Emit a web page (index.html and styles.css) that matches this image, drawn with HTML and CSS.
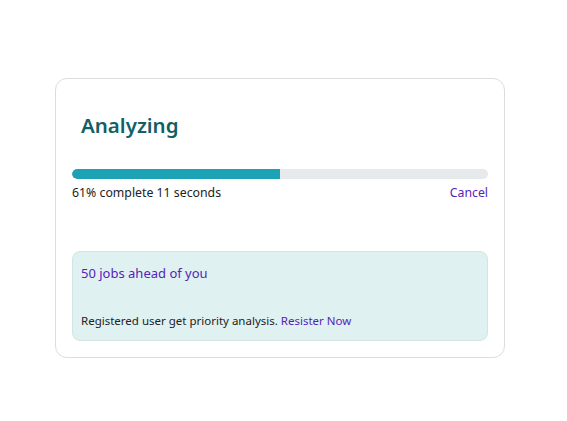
FILE: index.html
```html
<!DOCTYPE html>
<html>
<head>
<meta charset="utf-8">
<link rel="stylesheet" href="styles.css">
</head>
<body>
<div class="card">
  <h1 class="title">Analyzing</h1>
  <div class="track"><div class="fill" style="width: 50%"></div></div>
  <div class="status">
    <span>61% complete 11 seconds</span>
    <a class="link" href="#">Cancel</a>
  </div>
  <div class="info">
    <div class="jobs">50 jobs ahead of you</div>
    <div class="note">Registered user get priority analysis. <a class="link" href="#">Resister Now</a></div>
  </div>
</div>
</body>
</html>
```
FILE: styles.css
```css
* { box-sizing: border-box; }
html, body { margin: 0; padding: 0; background: #fff; }
body {
  font-family: "Noto Sans", "Open Sans", sans-serif;
  color: #222;
  padding: 78px 0 0 55px;
}
.card {
  width: 450px;
  height: 280px;
  border: 1px solid #dcdcdc;
  border-radius: 12px;
  padding: 29px 16px 16px 16px;
}
.title {
  margin: 0 0 0 9px;
  font-size: 20.5px;
  font-weight: 600;
  color: #125f66;
  line-height: 34px;
}
.track {
  margin-top: 27px;
  height: 10px;
  background: #e6eaed;
  border-radius: 5px;
  overflow: hidden;
}
.fill {
  height: 100%;
  background: #1ca2b4;
  border-radius: 5px 0 0 5px;
}
.status {
  display: flex;
  justify-content: space-between;
  font-size: 12.3px;
  line-height: 16px;
  margin-top: 6px;
}
.link { color: #5522bb; text-decoration: none; }
.info {
  margin-top: 50px;
  height: 90px;
  background: #e0f1f1;
  border: 1px solid #d4e4e4;
  border-radius: 8px;
  padding: 12px 8px 0 8px;
}
.jobs {
  color: #5522bb;
  font-size: 13px;
  line-height: 18px;
}
.note {
  margin-top: 31px;
  font-size: 11.5px;
  line-height: 16px;
}
```
